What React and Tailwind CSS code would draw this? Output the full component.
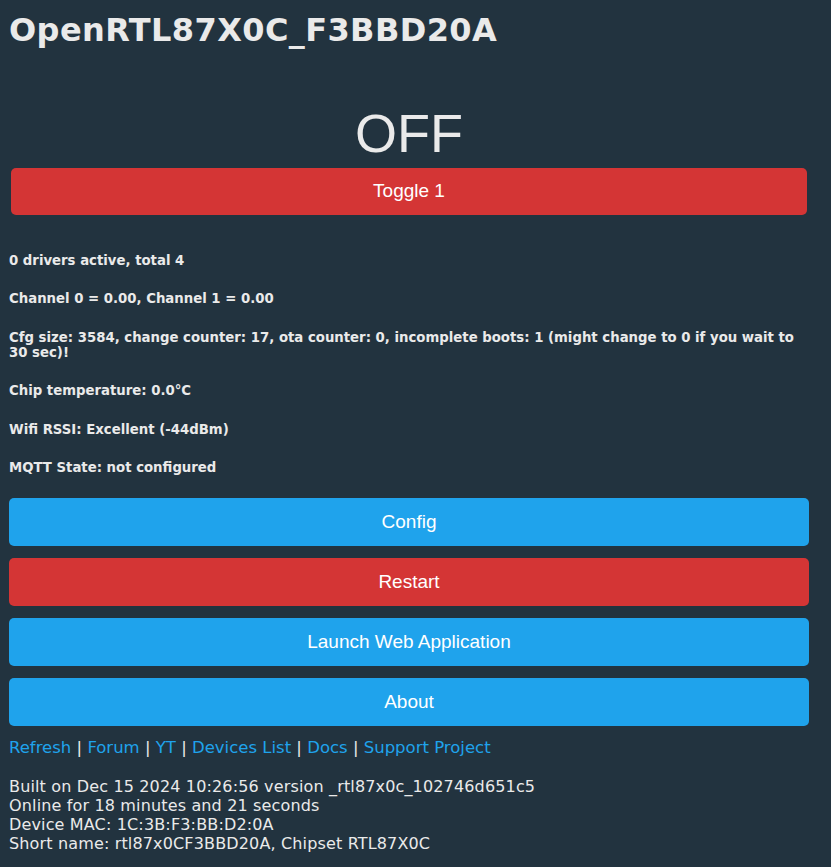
const STATUS = [
  '0 drivers active, total 4',
  'Channel 0 = 0.00, Channel 1 = 0.00',
  'Cfg size: 3584, change counter: 17, ota counter: 0, incomplete boots: 1 (might change to 0 if you wait to 30 sec)!',
  'Chip temperature: 0.0°C',
  'Wifi RSSI: Excellent (-44dBm)',
  'MQTT State: not configured',
]

const BUTTONS = [
  { label: 'Config', red: false },
  { label: 'Restart', red: true },
  { label: 'Launch Web Application', red: false },
  { label: 'About', red: false },
]

const LINKS = ['Refresh', 'Forum', 'YT', 'Devices List', 'Docs', 'Support Project']

const INFO = [
  'Built on Dec 15 2024 10:26:56 version _rtl87x0c_102746d651c5',
  'Online for 18 minutes and 21 seconds',
  'Device MAC: 1C:3B:F3:BB:D2:0A',
  'Short name: rtl87x0CF3BBD20A, Chipset RTL87X0C',
]

function Btn({ label, red }) {
  return (
    <button
      className={
        'h-[48px] w-full rounded-[5px] text-white text-[19px] font-["Liberation_Sans",Arial,sans-serif] ' +
        (red ? 'bg-[#d43535]' : 'bg-[#1fa3ec]')
      }
    >
      {label}
    </button>
  )
}

export default function App() {
  return (
    <div className="min-h-screen bg-[#22333f] pt-[12px] pl-[9px] text-[#eaeaea] font-['DejaVu_Sans',Verdana,sans-serif]">
      <div className="w-[800px] flex flex-col">
        {/* Header */}
        <h1 className="text-[32px] leading-[37px] font-bold tracking-[0.4px]">OpenRTL87X0C_F3BBD20A</h1>

        {/* State + toggle */}
        <div className="mt-[53px] text-center text-[54px] leading-[62px] font-['Liberation_Sans',Arial,sans-serif]">
          OFF
        </div>
        <div className="mt-[4px] px-[2px]">
          <button className="h-[47px] w-full rounded-[5px] bg-[#d43535] text-white text-[19px] font-['Liberation_Sans',Arial,sans-serif]">
            Toggle 1
          </button>
        </div>

        {/* Status */}
        <div className="mt-[38px] flex flex-col gap-[22.8px]">
          {STATUS.map((s) => (
            <div key={s} className="text-[13.28px] leading-[15.5px] font-bold">
              {s}
            </div>
          ))}
        </div>

        {/* Actions */}
        <div className="mt-[23px] flex flex-col gap-[12px]">
          {BUTTONS.map((b) => (
            <Btn key={b.label} {...b} />
          ))}
        </div>

        {/* Links */}
        <div className="mt-[12px] text-[16.5px] leading-[19px]">
          {LINKS.map((l, i) => (
            <span key={l}>
              {i > 0 && ' | '}
              <a className="text-[#1fa3ec]" href="#">{l}</a>
            </span>
          ))}
        </div>

        {/* Device info */}
        <div className="mt-[20px] text-[16px] leading-[19px] tracking-[0.15px]">
          {INFO.map((l) => (
            <div key={l}>{l}</div>
          ))}
        </div>
      </div>
    </div>
  )
}
